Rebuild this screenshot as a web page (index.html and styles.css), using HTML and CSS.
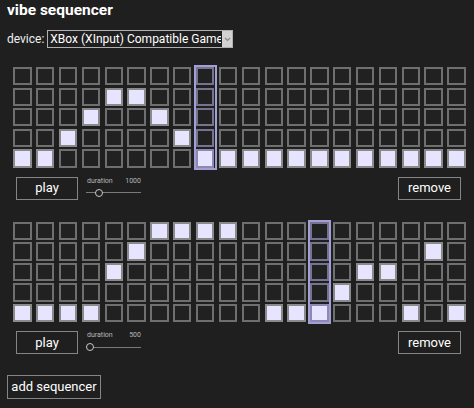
FILE: index.html
```html
<!DOCTYPE html>
<html>
<head>
<meta charset="utf-8">
<title>vibe sequencer</title>
<link rel="stylesheet" href="styles.css">
</head>
<body>
<h1 class="title">vibe sequencer</h1>
<div class="device-row">
  <label class="device-label" for="dev">device:</label>
  <span class="select-wrap">
    <select id="dev" class="device-select"><option>XBox (XInput) Compatible Gamepad (STANDARD GAMEPAD)</option></select>
    <span class="select-arrow"><svg width="9" height="14" viewBox="0 0 9 14"><path d="M2 6 L4.5 8.5 L7 6" fill="none" stroke="#8a8a8a" stroke-width="1.2"/></svg></span>
  </span>
</div>

<section class="sequencer">
  <div class="grid">
    <div class="col"><i class="c"></i><i class="c"></i><i class="c"></i><i class="c"></i><i class="c on"></i></div>
    <div class="col"><i class="c"></i><i class="c"></i><i class="c"></i><i class="c"></i><i class="c on"></i></div>
    <div class="col"><i class="c"></i><i class="c"></i><i class="c"></i><i class="c on"></i><i class="c"></i></div>
    <div class="col"><i class="c"></i><i class="c"></i><i class="c on"></i><i class="c"></i><i class="c"></i></div>
    <div class="col"><i class="c"></i><i class="c on"></i><i class="c"></i><i class="c"></i><i class="c"></i></div>
    <div class="col"><i class="c"></i><i class="c on"></i><i class="c"></i><i class="c"></i><i class="c"></i></div>
    <div class="col"><i class="c"></i><i class="c"></i><i class="c on"></i><i class="c"></i><i class="c"></i></div>
    <div class="col"><i class="c"></i><i class="c"></i><i class="c"></i><i class="c on"></i><i class="c"></i></div>
    <div class="col active"><i class="c"></i><i class="c"></i><i class="c"></i><i class="c"></i><i class="c on"></i></div>
    <div class="col"><i class="c"></i><i class="c"></i><i class="c"></i><i class="c"></i><i class="c on"></i></div>
    <div class="col"><i class="c"></i><i class="c"></i><i class="c"></i><i class="c"></i><i class="c on"></i></div>
    <div class="col"><i class="c"></i><i class="c"></i><i class="c"></i><i class="c"></i><i class="c on"></i></div>
    <div class="col"><i class="c"></i><i class="c"></i><i class="c"></i><i class="c"></i><i class="c on"></i></div>
    <div class="col"><i class="c"></i><i class="c"></i><i class="c"></i><i class="c"></i><i class="c on"></i></div>
    <div class="col"><i class="c"></i><i class="c"></i><i class="c"></i><i class="c"></i><i class="c on"></i></div>
    <div class="col"><i class="c"></i><i class="c"></i><i class="c"></i><i class="c"></i><i class="c on"></i></div>
    <div class="col"><i class="c"></i><i class="c"></i><i class="c"></i><i class="c"></i><i class="c on"></i></div>
    <div class="col"><i class="c"></i><i class="c"></i><i class="c"></i><i class="c"></i><i class="c on"></i></div>
    <div class="col"><i class="c"></i><i class="c"></i><i class="c"></i><i class="c"></i><i class="c on"></i></div>
    <div class="col"><i class="c"></i><i class="c"></i><i class="c"></i><i class="c"></i><i class="c on"></i></div>
  </div>
  <div class="controls">
    <button class="btn play-btn">play</button>
    <div class="slider-box">
      <div class="slider-labels"><span>duration</span><span>1000</span></div>
      <input class="slider" type="range" min="500" max="3000" value="1000">
    </div>
    <button class="btn remove-btn">remove</button>
  </div>
</section>

<section class="sequencer">
  <div class="grid">
    <div class="col"><i class="c"></i><i class="c"></i><i class="c"></i><i class="c"></i><i class="c on"></i></div>
    <div class="col"><i class="c"></i><i class="c"></i><i class="c"></i><i class="c"></i><i class="c on"></i></div>
    <div class="col"><i class="c"></i><i class="c"></i><i class="c"></i><i class="c"></i><i class="c on"></i></div>
    <div class="col"><i class="c"></i><i class="c"></i><i class="c"></i><i class="c"></i><i class="c on"></i></div>
    <div class="col"><i class="c"></i><i class="c"></i><i class="c on"></i><i class="c"></i><i class="c"></i></div>
    <div class="col"><i class="c"></i><i class="c on"></i><i class="c"></i><i class="c"></i><i class="c"></i></div>
    <div class="col"><i class="c on"></i><i class="c"></i><i class="c"></i><i class="c"></i><i class="c"></i></div>
    <div class="col"><i class="c on"></i><i class="c"></i><i class="c"></i><i class="c"></i><i class="c"></i></div>
    <div class="col"><i class="c on"></i><i class="c"></i><i class="c"></i><i class="c"></i><i class="c"></i></div>
    <div class="col"><i class="c on"></i><i class="c"></i><i class="c"></i><i class="c"></i><i class="c"></i></div>
    <div class="col"><i class="c"></i><i class="c"></i><i class="c"></i><i class="c"></i><i class="c"></i></div>
    <div class="col"><i class="c"></i><i class="c"></i><i class="c"></i><i class="c"></i><i class="c on"></i></div>
    <div class="col"><i class="c"></i><i class="c"></i><i class="c"></i><i class="c"></i><i class="c on"></i></div>
    <div class="col active"><i class="c"></i><i class="c"></i><i class="c"></i><i class="c"></i><i class="c on"></i></div>
    <div class="col"><i class="c"></i><i class="c"></i><i class="c"></i><i class="c on"></i><i class="c"></i></div>
    <div class="col"><i class="c"></i><i class="c"></i><i class="c on"></i><i class="c"></i><i class="c"></i></div>
    <div class="col"><i class="c"></i><i class="c"></i><i class="c on"></i><i class="c"></i><i class="c"></i></div>
    <div class="col"><i class="c"></i><i class="c"></i><i class="c"></i><i class="c"></i><i class="c on"></i></div>
    <div class="col"><i class="c"></i><i class="c on"></i><i class="c"></i><i class="c"></i><i class="c"></i></div>
    <div class="col"><i class="c"></i><i class="c"></i><i class="c"></i><i class="c"></i><i class="c on"></i></div>
  </div>
  <div class="controls">
    <button class="btn play-btn">play</button>
    <div class="slider-box">
      <div class="slider-labels"><span>duration</span><span>500</span></div>
      <input class="slider" type="range" min="500" max="3000" value="500">
    </div>
    <button class="btn remove-btn">remove</button>
  </div>
</section>

<button class="btn add-btn">add sequencer</button>
</body>
</html>
```
FILE: styles.css
```css
html {
  background: #1f1f1f;
}
body {
  margin: 0;
  padding: 0 7px;
  background: #1f1f1f;
  color: #ffffff;
  font-family: Roboto, "Open Sans", sans-serif;
  font-size: 12px;
}
.title {
  margin: 0;
  font-size: 15.5px;
  font-weight: 700;
  line-height: 20px;
}
.device-row {
  margin-top: 10px;
  height: 18px;
  display: flex;
  align-items: center;
}
.device-label {
  font-size: 12px;
  margin-right: 3px;
  color: #f0f0f0;
}
.select-wrap {
  position: relative;
  display: inline-block;
  height: 18px;
}
.device-select {
  -webkit-appearance: none;
  appearance: none;
  box-sizing: border-box;
  width: 186px;
  height: 18px;
  margin: 0;
  padding: 0 11px 0 2px;
  border: 1px solid #b0b0b0;
  border-radius: 0;
  background: #1f1f1f;
  color: #ffffff;
  font-family: Roboto, "Open Sans", sans-serif;
  font-size: 12px;
  line-height: 16px;
  outline: none;
}
.select-arrow {
  position: absolute;
  right: 1px;
  top: 1px;
  width: 10px;
  height: 16px;
  background: #d2d2d2;
  display: flex;
  align-items: center;
  justify-content: center;
}
.sequencer {
  margin-top: 17px;
}
.sequencer + .sequencer {
  margin-top: 20px;
}
.grid {
  display: flex;
  margin-left: 4px;
  width: 457px;
}
.col {
  flex: 1;
  box-sizing: border-box;
  display: flex;
  flex-direction: column;
  align-items: center;
  gap: 2.3px;
  padding: 0;
  border: 2px solid transparent;
}
.col.active {
  border-color: #a29ed6;
}
.c {
  display: block;
  box-sizing: border-box;
  width: 18.3px;
  height: 18.3px;
  border: 2px solid #6f6f6f;
  background: #212121;
}
.c.on {
  background: #e6e4ff;
  border-color: #8a8a8a;
}
.col.active .c {
  border-color: #77738f;
}
.col.active .c.on {
  border-color: #8d89b0;
}
.controls {
  display: flex;
  align-items: center;
  margin-top: 7px;
  padding: 0 6px 0 9px;
  height: 23px;
}
.btn {
  box-sizing: border-box;
  height: 23px;
  margin: 0;
  padding: 0;
  background: #1f1f1f;
  border: 1px solid #858585;
  border-radius: 0;
  color: #ffffff;
  font-family: Roboto, "Open Sans", sans-serif;
  font-size: 13px;
  line-height: 20px;
}
.play-btn {
  width: 62px;
}
.remove-btn {
  width: 63px;
  margin-left: auto;
}
.add-btn {
  display: block;
  margin-top: 21px;
  width: 94px;
  height: 24px;
}
.slider-box {
  margin-left: 8px;
  width: 56px;
  height: 23px;
  display: flex;
  flex-direction: column;
}
.slider-labels {
  display: flex;
  justify-content: space-between;
  font-size: 7px;
  line-height: 9px;
  color: #b8b8b8;
  padding: 0 1px 0 1px;
}
.slider {
  -webkit-appearance: none;
  appearance: none;
  width: 55px;
  height: 14px;
  margin: 0;
  padding: 0;
  background: transparent;
  outline: none;
}
.slider::-webkit-slider-runnable-track {
  height: 1px;
  background: #7a7a7a;
}
.slider::-webkit-slider-thumb {
  -webkit-appearance: none;
  appearance: none;
  box-sizing: border-box;
  width: 8px;
  height: 8px;
  margin-top: -3.5px;
  border-radius: 50%;
  border: 1.5px solid #c8c8c8;
  background: #1f1f1f;
}
```
